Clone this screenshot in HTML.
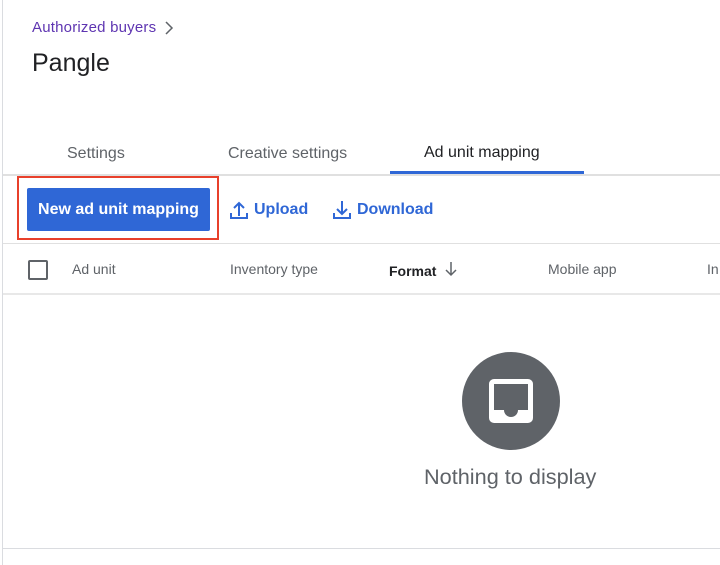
<!DOCTYPE html>
<html><head><style>
body{margin:0;width:720px;height:565px;background:#fff;font-family:"Liberation Sans",Arial,sans-serif;position:relative;overflow:hidden}
.a{position:absolute;white-space:nowrap}
</style></head><body>
<div class="a" style="left:2px;top:0;width:1px;height:565px;background:#dadce0"></div>
<div class="a" style="left:32px;top:19px;font-size:15px;color:#5e35b1;letter-spacing:0.2px">Authorized buyers</div>
<svg class="a" style="left:164px;top:21px" width="10" height="14" viewBox="0 0 10 14"><path d="M2 1l6 6-6 6" stroke="#5f6368" stroke-width="1.5" fill="none"/></svg>
<div class="a" style="left:32px;top:49px;font-size:25px;color:#202124">Pangle</div>
<div class="a" style="left:67px;top:145px;font-size:16px;color:#5f6368">Settings</div>
<div class="a" style="left:228px;top:145px;font-size:16px;color:#5f6368">Creative settings</div>
<div class="a" style="left:424px;top:144px;font-size:16px;color:#202124">Ad unit mapping</div>
<div class="a" style="left:390px;top:171px;width:194px;height:3px;background:#2f67d6"></div>
<div class="a" style="left:3px;top:174px;width:717px;height:2px;background:#e0e0e0"></div>
<div class="a" style="left:17px;top:176px;width:202px;height:64px;border:2px solid #e8402b;box-sizing:border-box"></div>
<div class="a" style="left:27px;top:188px;width:183px;height:43px;background:#2f67d6;border-radius:2px;color:#fff;font-size:16px;font-weight:bold;line-height:43px;text-align:center">New ad unit mapping</div>
<svg class="a" style="left:228px;top:199px" width="22" height="22" viewBox="0 0 22 22"><path d="M11 17V4M6 9l5-5 5 5M3 14v5h16v-5" stroke="#2f67d6" stroke-width="2" fill="none"/></svg>
<div class="a" style="left:254px;top:201px;font-size:16px;font-weight:bold;color:#2f67d6">Upload</div>
<svg class="a" style="left:331px;top:199px" width="22" height="22" viewBox="0 0 22 22"><path d="M11 2v13M6 10l5 5 5-5M3 14v5h16v-5" stroke="#2f67d6" stroke-width="2" fill="none"/></svg>
<div class="a" style="left:357px;top:201px;font-size:16px;font-weight:bold;color:#2f67d6">Download</div>
<div class="a" style="left:3px;top:243px;width:717px;height:1px;background:#e0e0e0"></div>
<div class="a" style="left:28px;top:260px;width:16px;height:16px;border:2px solid #5f6368;border-radius:2px"></div>
<div class="a" style="left:72px;top:261px;font-size:14px;color:#5f6368">Ad unit</div>
<div class="a" style="left:230px;top:261px;font-size:14px;color:#5f6368">Inventory type</div>
<div class="a" style="left:389px;top:263px;font-size:14px;font-weight:bold;color:#202124">Format</div>
<svg class="a" style="left:444px;top:261px" width="14" height="16" viewBox="0 0 14 16"><path d="M7 1v13M2 9l5 5 5-5" stroke="#5f6368" stroke-width="1.5" fill="none"/></svg>
<div class="a" style="left:548px;top:261px;font-size:14px;color:#5f6368">Mobile app</div>
<div class="a" style="left:707px;top:261px;font-size:14px;color:#5f6368">In</div>
<div class="a" style="left:3px;top:293px;width:717px;height:2px;background:#e8e8e8"></div>
<div class="a" style="left:462px;top:352px;width:98px;height:98px;border-radius:50%;background:#5f6368"></div>
<svg class="a" style="left:489px;top:379px" width="44" height="44" viewBox="0 0 44 44"><rect x="0" y="0" width="44" height="44" rx="5" fill="#fff"/><path d="M5 5h34v26h-10a7 7 0 0 1-14 0H5z" fill="#5f6368"/></svg>
<div class="a" style="left:424px;top:464px;font-size:21.7px;color:#5f6368">Nothing to display</div>
<div class="a" style="left:3px;top:548px;width:717px;height:1px;background:#dadce0"></div>
</body></html>
